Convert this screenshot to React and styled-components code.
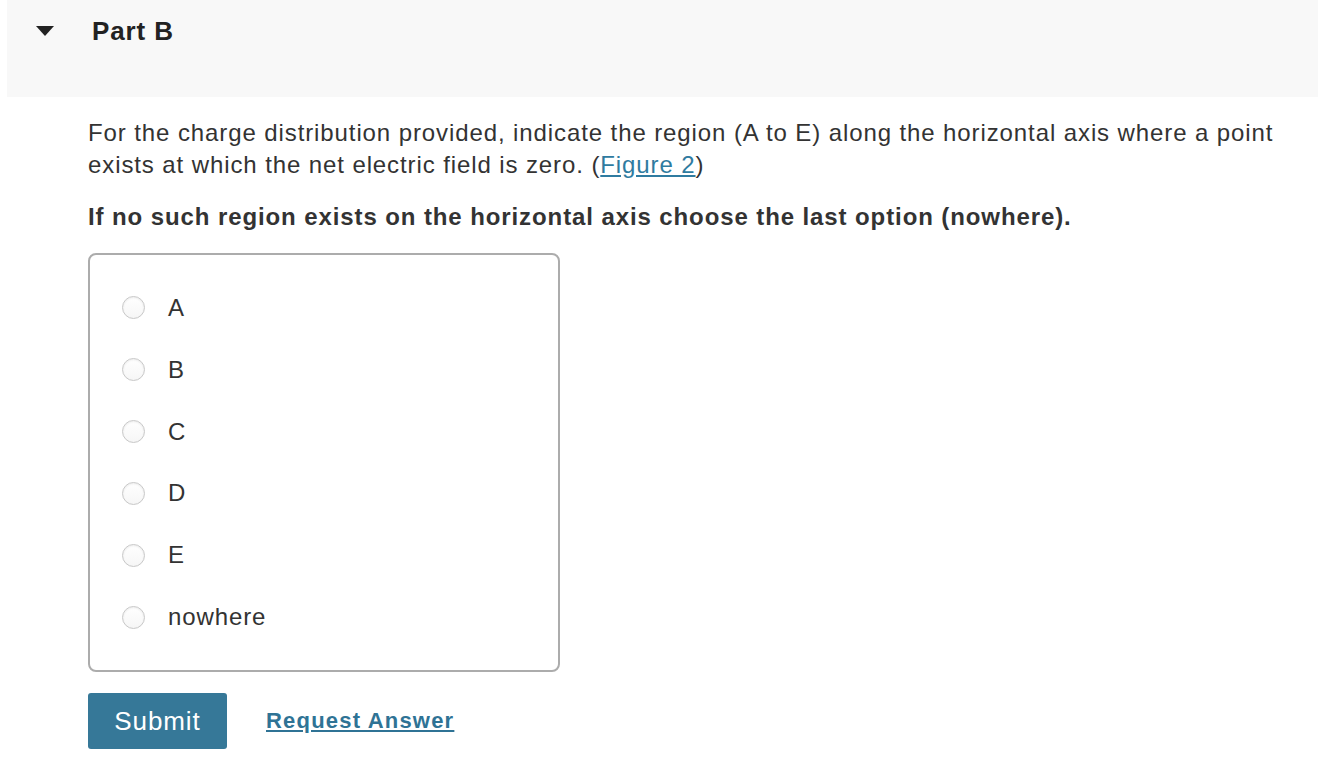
import React, { useState } from "react"
import styled, { createGlobalStyle } from "styled-components"

const GlobalStyle = createGlobalStyle`
    body {
        margin: 0;
        background: #fff;
        font-family: "Liberation Sans", Arial, sans-serif;
        color: #333;
    }
`

const Page = styled.div`
    padding: 0 8px 0 7px;
`

const Header = styled.div`
    display: flex;
    align-items: flex-start;
    height: 97px;
    background: #f8f8f8;
`

const Caret = styled.span`
    width: 0;
    height: 0;
    margin: 26px 0 0 29px;
    border-left: 9px solid transparent;
    border-right: 9px solid transparent;
    border-top: 10px solid #222;
`

const Title = styled.h2`
    margin: 15px 0 0 38px;
    font-size: 26px;
    letter-spacing: 0.9px;
    font-weight: bold;
    color: #222;
    line-height: 32px;
`

const Body = styled.div`
    padding: 20px 30px 0 81px;
`

const Prompt = styled.p`
    margin: 0;
    font-size: 24px;
    letter-spacing: 0.9px;
    line-height: 32px;
    color: #333;
`

const FigureLink = styled.a`
    color: #2f7ba0;
    text-decoration: underline;
    cursor: pointer;
`

const Note = styled.p`
    margin: 20px 0 0;
    font-size: 24px;
    letter-spacing: 0.9px;
    line-height: 32px;
    font-weight: bold;
    color: #333;
`

const Choices = styled.div`
    display: flex;
    flex-direction: column;
    width: 472px;
    height: 419px;
    margin-top: 20px;
    padding: 22px 0;
    border: 2px solid #acacac;
    border-radius: 8px;
    box-sizing: border-box;
`

const Choice = styled.label`
    display: flex;
    align-items: center;
    height: 62px;
    padding-left: 32px;
    font-size: 24px;
    letter-spacing: 0.9px;
    color: #333;
    cursor: pointer;
`

const Radio = styled.span`
    width: 23px;
    height: 23px;
    border-radius: 50%;
    border: 1px solid #c8c8c8;
    box-sizing: border-box;
    background: linear-gradient(#fff, #f6f6f6);
    box-shadow: inset 0 1px 2px rgba(0, 0, 0, 0.08);
    margin-right: 23px;
    position: relative;

    ${({ checked }) => checked && `
        border-color: #2f7ba0;
        &::after {
            content: "";
            position: absolute;
            inset: 5px;
            border-radius: 50%;
            background: #2f7ba0;
        }
    `}
`

const Actions = styled.div`
    display: flex;
    align-items: center;
    margin-top: 21px;
    gap: 39px;
`

const SubmitButton = styled.button`
    width: 139px;
    height: 56px;
    border: none;
    border-radius: 3px;
    background: #367898;
    color: #fff;
    font-family: "Liberation Sans", Arial, sans-serif;
    font-size: 26px;
    letter-spacing: 0.9px;
    cursor: pointer;
`

const RequestLink = styled.a`
    font-size: 22px;
    letter-spacing: 1.2px;
    font-weight: bold;
    color: #2f7395;
    text-decoration: underline;
    cursor: pointer;
`

const options = ["A", "B", "C", "D", "E", "nowhere"]

const App = () => {
    const [ picked, setPicked ] = useState(null)

    return (
        <Page>
            <GlobalStyle />
            <Header>
                <Caret />
                <Title>Part B</Title>
            </Header>
            <Body>
                <Prompt>
                    For the charge distribution provided, indicate the region (A to E) along the horizontal axis where a point exists at which the net electric field is zero. (<FigureLink>Figure 2</FigureLink>)
                </Prompt>
                <Note>If no such region exists on the horizontal axis choose the last option (nowhere).</Note>
                <Choices>
                    {options.map(option => (
                        <Choice key={option} onClick={() => setPicked(option)}>
                            <Radio checked={picked === option} />
                            {option}
                        </Choice>
                    ))}
                </Choices>
                <Actions>
                    <SubmitButton>Submit</SubmitButton>
                    <RequestLink>Request Answer</RequestLink>
                </Actions>
            </Body>
        </Page>
    )
}

export default App
